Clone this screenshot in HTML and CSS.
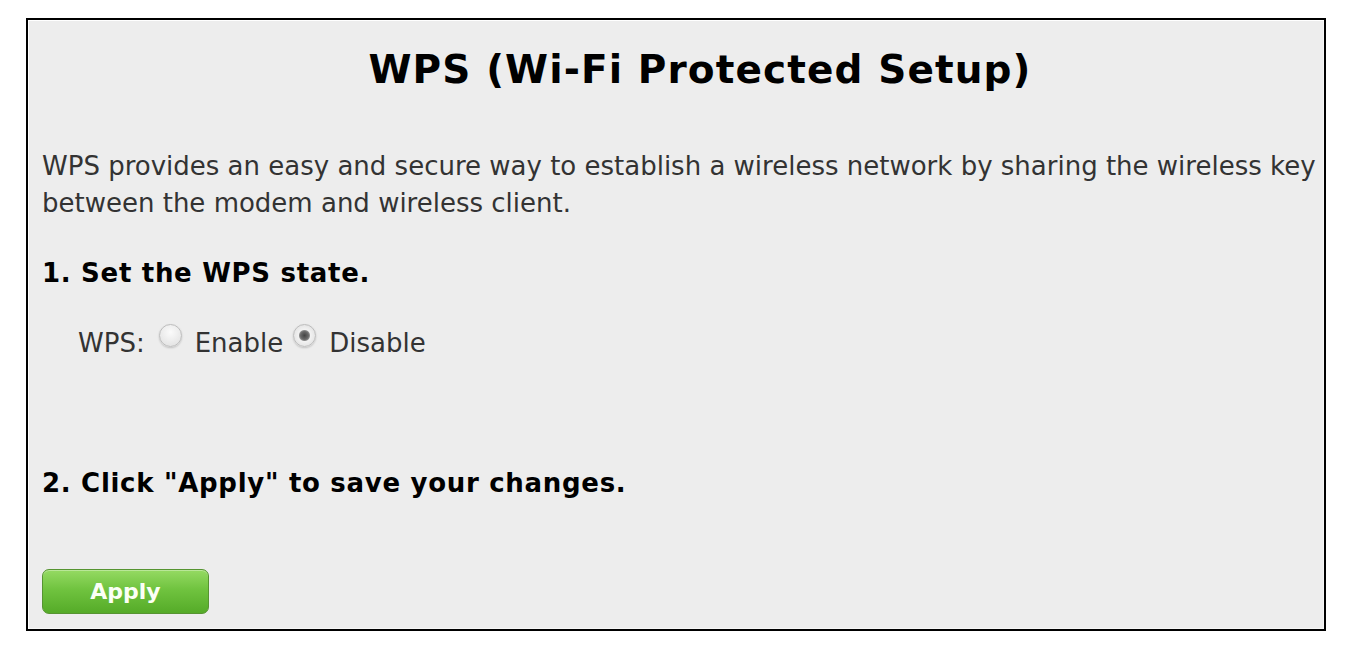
FILE: index.html
```html
<!DOCTYPE html>
<html lang="en">
<head>
    <meta charset="UTF-8">
    <title>WPS</title>
    <link rel="stylesheet" href="styles.css">
</head>
<body>

<div class="panel">
    <h1>WPS (Wi-Fi Protected Setup)</h1>

    <p class="intro">WPS provides an easy and secure way to establish a wireless network by sharing the wireless key between the modem and wireless client.</p>

    <h3>1. Set the WPS state.</h3>
    <div class="wps-row">
        <span>WPS:</span>
        <label><input type="radio" name="wps" value="on">Enable</label>
        <label><input type="radio" name="wps" value="off" checked>Disable</label>
    </div>

    <h3 class="step-two">2. Click "Apply" to save your changes.</h3>

    <button class="apply-button">Apply</button>
</div>

</body>
</html>
```

FILE: styles.css
```css
body {
    font-family: "DejaVu Sans", Verdana, sans-serif;
    margin: 0;
    padding: 18px 0 0 26px;
    background: white;
}

.panel {
    width: 1282px;
    height: 609px;
    border: 2px solid black;
    box-shadow: inset 1px 1px 0 white, inset -1px -1px 0 #f6f6f6;
    background-color: #ededed;
    padding: 0 0 0 14px;
    overflow: hidden;
}

h1 {
    text-align: center;
    font-size: 39px;
    line-height: 50px;
    letter-spacing: 1.1px;
    margin: 25px 0 0;
    padding-left: 34px;
    color: black;
}

.intro {
    font-size: 26px;
    line-height: 37px;
    color: #333;
    margin: 53px 0 0;
}

h3 {
    font-size: 26px;
    line-height: 36px;
    letter-spacing: 0.7px;
    margin: 33px 0 0;
    color: black;
}

.wps-row {
    display: flex;
    align-items: center;
    font-size: 26px;
    line-height: 36px;
    color: #333;
    margin: 33px 0 0 36px;
}

.wps-row label {
    display: flex;
    align-items: center;
}

.wps-row input[type="radio"] {
    appearance: none;
    width: 23px;
    height: 23px;
    margin: 0 13px 14px 14px;
    border: 1px solid #bdbdbd;
    border-radius: 50%;
    background: radial-gradient(circle at 50% 35%, #fbfbfb, #dedede);
    box-shadow: 0 1px 2px rgba(0, 0, 0, 0.18);
}

.wps-row label + label input[type="radio"] {
    margin-left: 10px;
}

.wps-row input[type="radio"]:checked {
    background: radial-gradient(circle, #444 0, #6a6a6a 4px, #8a8a8a 5px, #f2f2f2 6px, #d9d9d9);
}

.step-two {
    margin-top: 104px;
}

.apply-button {
    display: block;
    margin-top: 68px;
    width: 167px;
    height: 45px;
    border: 1px solid #569431;
    border-radius: 7px;
    background: linear-gradient(#95da63, #70c33f 45%, #55ab28);
    box-shadow: inset 0 1px 0 rgba(255, 255, 255, 0.35);
    color: #fbfff6;
    font-family: "DejaVu Sans", Verdana, sans-serif;
    font-size: 22px;
    font-weight: bold;
    cursor: pointer;
}
```
